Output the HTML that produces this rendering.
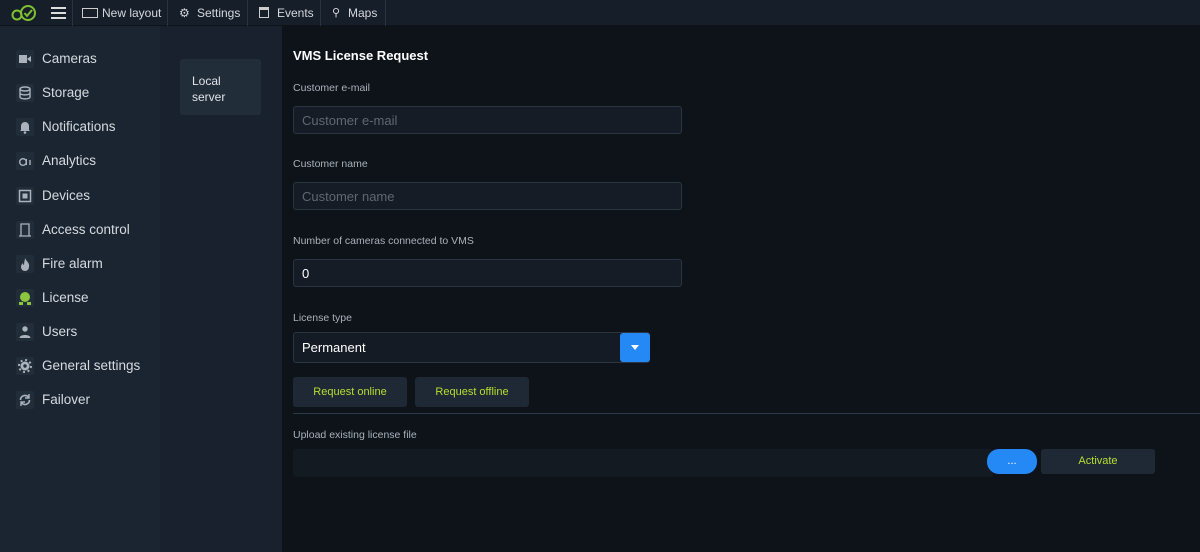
<!DOCTYPE html>
<html><head><style>
*{box-sizing:border-box;margin:0;padding:0}
body{width:1200px;height:552px;overflow:hidden;background:#0e131a;font-family:"Liberation Sans",sans-serif;color:#c9ced6;position:relative}
.top{position:absolute;left:0;top:0;width:1200px;height:26px;background:#161e29;border-bottom:1px solid #0e131a}
.tb{position:absolute;top:0;height:26px;font-size:12px;color:#d4d8de;line-height:26px;border-right:1px solid #2a3441}
.side{position:absolute;left:0;top:26px;width:160px;height:526px;background:#1b2532}
.item{position:absolute;left:16px;height:20px;font-size:13.5px;color:#d6dae0;line-height:20px}
.ic{position:absolute;left:0;top:1px;width:18px;height:18px;background:#222d3a;border-radius:2px}
.ic svg{position:absolute;left:2px;top:2px}
.item span{position:absolute;left:26px;white-space:nowrap}
.p2{position:absolute;left:160px;top:26px;width:122px;height:526px;background:#18212d}
.loc{position:absolute;left:180px;top:59px;width:81px;height:56px;background:#222d3a;border-radius:3px;font-size:12px;color:#e0e3e8;padding:14px 12px;line-height:16px}
.lbl{position:absolute;left:293px;font-size:10.5px;color:#aab1bb}
.inp{position:absolute;left:293px;width:389px;height:28px;background:#151c25;border:1px solid #2b3541;border-radius:3px;font-size:13px;color:#5e6773;padding:6px 8px}
.btn{position:absolute;top:377px;height:30px;background:#1f2936;border-radius:3px;font-size:11px;color:#b7dd2e;text-align:center;line-height:30px}
</style></head><body>
<div class="top">
 <svg style="position:absolute;left:11px;top:4px" width="26" height="18" viewBox="0 0 26 18"><circle cx="6" cy="11" r="4.5" fill="none" stroke="#7ec232" stroke-width="2"/><circle cx="17" cy="9" r="7" fill="none" stroke="#7ec232" stroke-width="2"/><path d="M13.5 9l2.5 3 5-6" fill="none" stroke="#7ec232" stroke-width="2"/></svg>
 <div style="position:absolute;left:51px;top:7px;width:15px;height:2px;background:#ddd;box-shadow:0 5px 0 #ddd,0 10px 0 #ddd"></div>
 <div class="tb" style="left:72px;width:96px;border-left:1px solid #2a3441"><span style="position:absolute;left:9px;top:8px;width:16px;height:10px;border:1px solid #ccc"></span><span style="position:absolute;left:29px">New layout</span></div>
 <div class="tb" style="left:168px;width:80px"><span style="position:absolute;left:11px">⚙</span><span style="position:absolute;left:29px">Settings</span></div>
 <div class="tb" style="left:248px;width:73px"><span style="position:absolute;left:11px;top:7px;width:10px;height:11px;border:1.5px solid #ccc;border-top-width:3px"></span><span style="position:absolute;left:29px">Events</span></div>
 <div class="tb" style="left:321px;width:65px"><span style="position:absolute;left:11px;font-size:11px">⚲</span><span style="position:absolute;left:27px">Maps</span></div>
</div>
<div class="side">
 <div class="item" style="top:23px"><i class="ic"><svg width="14" height="14"><rect x="1" y="3" width="8" height="8" fill="#aab2bc"/><path d="M9 7l4-3v6z" fill="#aab2bc"/></svg></i><span>Cameras</span></div>
 <div class="item" style="top:57px"><i class="ic"><svg width="14" height="14"><ellipse cx="7" cy="3" rx="5" ry="2" fill="none" stroke="#aab2bc" stroke-width="1.4"/><path d="M2 3v8c0 2.5 10 2.5 10 0V3M2 7c0 2.5 10 2.5 10 0" fill="none" stroke="#aab2bc" stroke-width="1.4"/></svg></i><span>Storage</span></div>
 <div class="item" style="top:91px"><i class="ic"><svg width="14" height="14"><path d="M3 10V6a4 4 0 018 0v4l1 1H2z" fill="#aab2bc"/><circle cx="7" cy="12.5" r="1.3" fill="#aab2bc"/></svg></i><span>Notifications</span></div>
 <div class="item" style="top:125px"><i class="ic"><svg width="14" height="14"><circle cx="5" cy="8" r="3.3" fill="none" stroke="#aab2bc" stroke-width="1.4"/><path d="M8.3 5v6M12 6v5" stroke="#aab2bc" stroke-width="1.4"/></svg></i><span>Analytics</span></div>
 <div class="item" style="top:160px"><i class="ic"><svg width="14" height="14"><rect x="1.5" y="1.5" width="11" height="11" fill="none" stroke="#aab2bc" stroke-width="1.5"/><rect x="4.5" y="4.5" width="5" height="5" fill="#aab2bc"/></svg></i><span>Devices</span></div>
 <div class="item" style="top:194px"><i class="ic"><svg width="14" height="14"><path d="M3 13V1h8v12M1 13h12" fill="none" stroke="#aab2bc" stroke-width="1.3"/></svg></i><span>Access control</span></div>
 <div class="item" style="top:228px"><i class="ic"><svg width="14" height="14"><path d="M7 1c1 3 5 5 4 9a4 4 0 01-8 0c0-2 1-3 2-4 0 2 1 2 1 2 0-3 1-5 1-7z" fill="#aab2bc"/></svg></i><span>Fire alarm</span></div>
 <div class="item" style="top:262px"><i class="ic"><b style="position:absolute;left:4px;top:3px;width:10px;height:10px;border-radius:50%;background:#8cc63f"></b><b style="position:absolute;left:3px;top:13px;width:4px;height:3px;background:#8cc63f"></b><b style="position:absolute;left:11px;top:13px;width:4px;height:3px;background:#8cc63f"></b></i><span>License</span></div>
 <div class="item" style="top:296px"><i class="ic"><svg width="14" height="14"><circle cx="7" cy="4" r="2.7" fill="#aab2bc"/><path d="M1.5 13c0-4 11-4 11 0z" fill="#aab2bc"/></svg></i><span>Users</span></div>
 <div class="item" style="top:330px"><i class="ic"><svg width="14" height="14"><circle cx="7" cy="7" r="4.5" fill="#aab2bc"/><circle cx="7" cy="7" r="6" fill="none" stroke="#aab2bc" stroke-width="2" stroke-dasharray="2 2.7"/><circle cx="7" cy="7" r="1.7" fill="#222d3a"/></svg></i><span>General settings</span></div>
 <div class="item" style="top:364px"><i class="ic"><svg width="14" height="14"><path d="M2.5 7a4.5 4.5 0 018-2.8M11.5 7a4.5 4.5 0 01-8 2.8" fill="none" stroke="#aab2bc" stroke-width="1.6"/><path d="M11 1v4H7M3 13V9h4" fill="none" stroke="#aab2bc" stroke-width="1.4"/></svg></i><span>Failover</span></div>
</div>
<div class="p2"></div>
<div class="loc">Local<br>server</div>
<div style="position:absolute;left:293px;top:48px;font-size:13px;font-weight:bold;color:#fff">VMS License Request</div>
<div class="lbl" style="top:82px">Customer e-mail</div>
<div class="inp" style="top:106px">Customer e-mail</div>
<div class="lbl" style="top:158px">Customer name</div>
<div class="inp" style="top:182px">Customer name</div>
<div class="lbl" style="top:235px">Number of cameras connected to VMS</div>
<div class="inp" style="top:259px;color:#fff">0</div>
<div class="lbl" style="top:312px">License type</div>
<div class="inp" style="top:332px;width:357px;height:31px;color:#fff;background:#141b24;padding-top:7px">Permanent</div>
<div style="position:absolute;left:620px;top:333px;width:30px;height:29px;background:#2589f5;border-radius:3px"><div style="position:absolute;left:11px;top:12px;border:4px solid transparent;border-top:5px solid #fff"></div></div>
<div class="btn" style="left:293px;width:114px">Request online</div>
<div class="btn" style="left:415px;width:114px">Request offline</div>
<div style="position:absolute;left:293px;top:413px;width:907px;height:1px;background:#2d3a49"></div>
<div class="lbl" style="top:429px">Upload existing license file</div>
<div style="position:absolute;left:293px;top:449px;width:700px;height:28px;background:#141a22;border-radius:3px"></div>
<div style="position:absolute;left:987px;top:449px;width:50px;height:25px;background:#2589f5;border-radius:12px;color:#fff;font-size:11px;text-align:center;line-height:25px">...</div>
<div class="btn" style="left:1041px;top:449px;width:114px;height:25px;line-height:25px">Activate</div>
</body></html>
